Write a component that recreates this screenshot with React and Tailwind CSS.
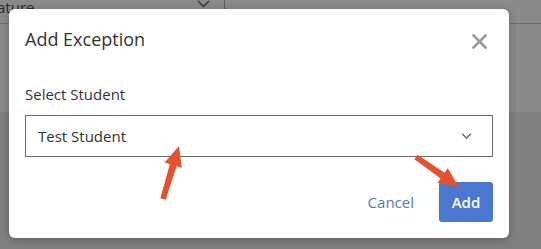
import React from 'react';

// polygon points for a fat annotation arrow
const arrowPoints = (x1, y1, x2, y2, shaft = 3.5, head = 9, headLen = 20) => {
    const dx = x2 - x1;
    const dy = y2 - y1;
    const len = Math.sqrt(dx * dx + dy * dy);
    const ux = dx / len;
    const uy = dy / len;
    const px = -uy;
    const py = ux;
    const bx = x2 - ux * headLen;
    const by = y2 - uy * headLen;
    const pts = [
        [x1 + px * shaft * 0.8, y1 + py * shaft * 0.8],
        [bx + px * shaft, by + py * shaft],
        [bx + px * head, by + py * head],
        [x2, y2],
        [bx - px * head, by - py * head],
        [bx - px * shaft, by - py * shaft],
        [x1 - px * shaft * 0.8, y1 - py * shaft * 0.8],
    ];
    return pts.map(p => p[0].toFixed(1) + ',' + p[1].toFixed(1)).join(' ');
};

const App = () => {
    return (
        <div className="relative w-[541px] h-[249px] overflow-hidden bg-[#808080]" style={{ fontFamily: '"Open Sans", "Liberation Sans", sans-serif' }}>
            {/* dimmed page behind the modal */}
            <div className="flex flex-col h-full">
                <div className="h-[112px] bg-[#8a8a8a] flex flex-col">
                    <div className="h-[24px] flex border-b border-[#6e6e6e]">
                        <div className="w-[225px] flex items-start justify-between border-r border-[#5e5e5e] pr-[14px] -mt-[3px]">
                            <span className="text-[15px] leading-[20px] text-[#2b2b2b] -ml-[3px]">ature</span>
                            <svg width="13" height="8" viewBox="0 0 13 8" className="mt-[3px]">
                                <path d="M1 1l5.5 5.5L12 1" fill="none" stroke="#3a3a3a" strokeWidth="1.5" />
                            </svg>
                        </div>
                        <div className="flex-1" />
                    </div>
                </div>
                <div className="flex-1 bg-[#808080]" />
            </div>

            {/* modal */}
            <div className="absolute left-[9px] top-[9px] w-[500px] h-[229px] bg-white rounded-[6px] shadow-[0_2px_8px_rgba(0,0,0,0.25)] px-[16px] pt-[17px]">
                <div className="flex items-center justify-between">
                    <h3 className="text-[18px] leading-[26px] text-[#333]">Add Exception</h3>
                    <button className="mr-[6px] mt-[4px]">
                        <svg width="15" height="15" viewBox="0 0 15 15">
                            <path d="M1.5 1.5l12 12M13.5 1.5l-12 12" stroke="#999" strokeWidth="2.6" strokeLinecap="square" />
                        </svg>
                    </button>
                </div>
                <label className="block mt-[32px] text-[15px] leading-[20px] text-[#333]">Select Student</label>
                <div className="mt-[11px] h-[42px] border border-[#6b6b6b] flex items-center justify-between pl-[12px] pr-[20px]">
                    <span className="text-[15px] text-[#333]">Test Student</span>
                    <svg width="11" height="6" viewBox="0 0 11 6">
                        <path d="M1 0.8l4.5 4.2L10 0.8" fill="none" stroke="#666" strokeWidth="1.4" />
                    </svg>
                </div>
                <div className="flex justify-end items-center mt-[25px]">
                    <button className="text-[15px] text-[#4a7bd0] mr-[25px]">Cancel</button>
                    <button className="w-[54px] h-[40px] rounded-[3px] bg-[#4a77cf] text-white text-[15px] font-semibold">Add</button>
                </div>
            </div>

            {/* annotation arrows */}
            <svg className="absolute inset-0 pointer-events-none" width="541" height="249">
                <polygon points={arrowPoints(163, 199, 179, 146)} fill="#e4532f" />
                <polygon points={arrowPoints(416, 157, 459, 187)} fill="#e4532f" />
            </svg>
        </div>
    );
};

export default App;
